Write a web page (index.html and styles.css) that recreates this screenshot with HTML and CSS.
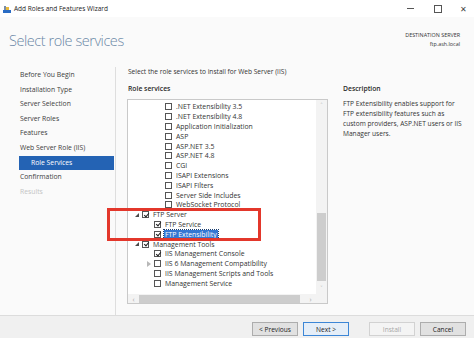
FILE: index.html
```html
<!DOCTYPE html>
<html lang="en">
<head>
    <meta charset="UTF-8">
    <title>Add Roles and Features Wizard</title>
    <link rel="stylesheet" href="styles.css">
</head>
<body>
    <div class="window">
        <!-- title bar -->
        <div class="titlebar">
            <svg class="app-icon" width="8" height="8" viewBox="0 0 8 8">
                <rect x="0" y="5" width="8" height="3" fill="#2a6cc4"/>
                <rect x="1" y="1" width="2" height="4" fill="#7a8da6"/>
                <rect x="3" y="2" width="3" height="3" fill="#e8b93a"/>
            </svg>
            <span class="title">Add Roles and Features Wizard</span>
            <div class="controls">
                <span class="ctl ctl-min"></span>
                <span class="ctl ctl-max"></span>
                <span class="ctl ctl-close">&#x2715;</span>
            </div>
        </div>

        <!-- header -->
        <div class="head">
            <h1>Select role services</h1>
            <div class="dest">
                <div>DESTINATION SERVER</div>
                <div>ftp.ash.local</div>
            </div>
        </div>

        <div class="main">
            <!-- steps -->
            <nav class="steps">
                <div class="step">Before You Begin</div>
                <div class="step">Installation Type</div>
                <div class="step">Server Selection</div>
                <div class="step">Server Roles</div>
                <div class="step">Features</div>
                <div class="step">Web Server Role (IIS)</div>
                <div class="step sub active">Role Services</div>
                <div class="step">Confirmation</div>
                <div class="step off">Results</div>
            </nav>

            <section class="content">
                <p class="intro">Select the role services to install for Web Server (IIS)</p>
                <div class="cols">
                    <div class="services">
                        <h2>Role services</h2>
                        <div class="treebox">
                            <div class="tree">
                                <div class="row l3"><i class="exp"></i><i class="cb"></i><span>.NET Extensibility 3.5</span></div>
                                <div class="row l3"><i class="exp"></i><i class="cb"></i><span>.NET Extensibility 4.8</span></div>
                                <div class="row l3"><i class="exp"></i><i class="cb"></i><span>Application Initialization</span></div>
                                <div class="row l3"><i class="exp"></i><i class="cb"></i><span>ASP</span></div>
                                <div class="row l3"><i class="exp"></i><i class="cb"></i><span>ASP.NET 3.5</span></div>
                                <div class="row l3"><i class="exp"></i><i class="cb"></i><span>ASP.NET 4.8</span></div>
                                <div class="row l3"><i class="exp"></i><i class="cb"></i><span>CGI</span></div>
                                <div class="row l3"><i class="exp"></i><i class="cb"></i><span>ISAPI Extensions</span></div>
                                <div class="row l3"><i class="exp"></i><i class="cb"></i><span>ISAPI Filters</span></div>
                                <div class="row l3"><i class="exp"></i><i class="cb"></i><span>Server Side Includes</span></div>
                                <div class="row l3"><i class="exp"></i><i class="cb"></i><span>WebSocket Protocol</span></div>
                                <div class="row l1"><i class="exp open"></i><i class="cb on"></i><span>FTP Server</span></div>
                                <div class="row l2"><i class="exp"></i><i class="cb on"></i><span>FTP Service</span></div>
                                <div class="row l2"><i class="exp"></i><i class="cb on"></i><span class="sel">FTP Extensibility</span></div>
                                <div class="row l1"><i class="exp open"></i><i class="cb on"></i><span>Management Tools</span></div>
                                <div class="row l2"><i class="exp"></i><i class="cb on"></i><span>IIS Management Console</span></div>
                                <div class="row l2"><i class="exp shut"></i><i class="cb"></i><span>IIS 6 Management Compatibility</span></div>
                                <div class="row l2"><i class="exp"></i><i class="cb"></i><span>IIS Management Scripts and Tools</span></div>
                                <div class="row l2"><i class="exp"></i><i class="cb"></i><span>Management Service</span></div>
                            </div>
                            <div class="vscroll">
                                <span class="arrow">&#x02C4;</span>
                                <span class="vtrack"><span class="vthumb"></span></span>
                                <span class="arrow">&#x02C5;</span>
                            </div>
                            <div class="hscroll">
                                <span class="arrow">&lsaquo;</span>
                                <span class="htrack"><span class="hthumb"></span></span>
                                <span class="arrow">&rsaquo;</span>
                            </div>
                            <div class="corner"></div>
                        </div>
                    </div>
                    <div class="desc">
                        <h2>Description</h2>
                        <p>FTP Extensibility enables support for FTP extensibility features such as custom providers, ASP.NET users or IIS Manager users.</p>
                    </div>
                </div>
            </section>

            <!-- annotation -->
            <div class="callout"></div>
        </div>

        <footer class="foot">
            <button class="btn">&lt; Previous</button>
            <button class="btn primary">Next &gt;</button>
            <button class="btn disabled">Install</button>
            <button class="btn">Cancel</button>
        </footer>
    </div>
</body>
</html>
```

FILE: styles.css
```css
/* base */
* {
    box-sizing: border-box;
    margin: 0;
    padding: 0;
}

body {
    font-family: 'Segoe UI', 'Open Sans', 'Noto Sans', sans-serif;
    background: #fafafa;
    color: #333;
    width: 474px;
    height: 338px;
    overflow: hidden;
}

.window {
    display: flex;
    flex-direction: column;
    height: 338px;
}

/* title bar */
.titlebar {
    height: 17px;
    background: #fff;
    display: flex;
    align-items: center;
    padding-left: 3px;
    font-size: 6.5px;
    color: #222;
}

.app-icon {
    margin-right: 3px;
}

.controls {
    margin-left: auto;
    display: flex;
    align-items: center;
}

.ctl {
    width: 28px;
    display: flex;
    justify-content: center;
    align-items: center;
    color: #444;
}

.ctl-min::before {
    content: '';
    width: 7px;
    height: 1px;
    background: #555;
}

.ctl-max::before {
    content: '';
    width: 6px;
    height: 6px;
    border: 1px solid #555;
}

.ctl-close {
    font-size: 8px;
    width: 22px;
}

/* header */
.head {
    height: 45px;
    display: flex;
    justify-content: space-between;
    padding: 14px 14px 0 9px;
}

.head h1 {
    font-size: 14.5px;
    font-weight: 300;
    letter-spacing: -0.45px;
    color: #6a87a6;
    line-height: 19px;
}

.dest {
    text-align: right;
    font-size: 5.4px;
    line-height: 9px;
    color: #333;
}

/* main */
.main {
    position: relative;
    height: 253px;
    display: flex;
}

.steps {
    width: 116px;
    margin-top: 5px;
    padding-top: 1px;
    border-right: 1px solid #dedede;
    font-size: 6.8px;
    color: #3c3c3c;
}

.step {
    height: 14.6px;
    line-height: 14.6px;
    padding-left: 20px;
}

.step.sub {
    margin-left: 19px;
    margin-right: 1px;
    padding-left: 12px;
}

.step.active {
    background: #2463b4;
    color: #fff;
}

.step.off {
    color: #c4c4c4;
}

.content {
    flex: 1;
    padding: 5px 0 0 11px;
}

.intro {
    font-size: 6.6px;
    line-height: 10px;
    padding-left: 1px;
}

.cols {
    display: flex;
    gap: 15px;
    margin-top: 7px;
}

.cols h2 {
    font-size: 6.8px;
    font-weight: 600;
    line-height: 10px;
    color: #2a2a2a;
}

.services h2 {
    padding-left: 1px;
}

/* tree */
.treebox {
    margin-top: 5px;
    width: 201px;
    height: 205px;
    border: 1px solid #c9c9c9;
    background: #fff;
    display: grid;
    grid-template-columns: 1fr 11px;
    grid-template-rows: 1fr 11px;
    overflow: hidden;
}

.tree {
    padding-top: 2px;
    overflow: hidden;
    font-size: 6.9px;
    color: #333;
}

.row {
    height: 9.8px;
    display: flex;
    align-items: center;
    white-space: nowrap;
}

.row.l1 { padding-left: 3px; }
.row.l2 { padding-left: 15px; }
.row.l3 { padding-left: 26px; }

.exp {
    width: 11px;
    height: 7px;
    display: flex;
    align-items: center;
    justify-content: center;
}

.exp.open::before {
    content: '';
    border-right: 4px solid #4a4a4a;
    border-top: 4px solid transparent;
}

.exp.shut::before {
    content: '';
    border-left: 4px solid #b8b8b8;
    border-top: 3px solid transparent;
    border-bottom: 3px solid transparent;
}

.cb {
    position: relative;
    width: 7px;
    height: 7px;
    border: 1px solid #555;
    background: #fff;
    margin-right: 4px;
}

.cb.on::after {
    content: '';
    position: absolute;
    left: 1.5px;
    top: -0.5px;
    width: 2px;
    height: 4px;
    border-right: 1.3px solid #222;
    border-bottom: 1.3px solid #222;
    transform: rotate(40deg);
}

.sel {
    background: #3477d2;
    color: #fff;
    padding: 0 1px;
    margin-left: -1px;
    outline: 1px dotted #1b3f70;
}

.vscroll {
    display: flex;
    flex-direction: column;
    align-items: center;
    background: #f3f3f3;
}

.hscroll {
    display: flex;
    align-items: center;
    background: #f3f3f3;
}

.corner {
    background: #f3f3f3;
}

.arrow {
    font-size: 7px;
    line-height: 11px;
    width: 11px;
    text-align: center;
    color: #a8a8a8;
}

.vtrack {
    flex: 1;
    width: 100%;
    display: flex;
    flex-direction: column;
    padding-top: 102px;
    padding-bottom: 2px;
}

.vthumb {
    display: block;
    height: 68px;
    margin: 0 1px;
    background: #cdcdcd;
}

.htrack {
    flex: 1;
    height: 100%;
    padding: 1px 0;
    padding-right: 5px;
    display: flex;
}

.hthumb {
    display: block;
    flex: 1;
    background: #cdcdcd;
}

/* description */
.desc {
    width: 122px;
}

.desc p {
    margin-top: 5px;
    font-size: 6.6px;
    line-height: 10px;
    color: #333;
}

/* red annotation box */
.callout {
    position: absolute;
    left: 107px;
    top: 146px;
    width: 154px;
    height: 33px;
    border: 3px solid #e3372b;
}

/* footer */
.foot {
    height: 23px;
    border-top: 1px solid #dcdcdc;
    background: #f0f0f0;
    display: flex;
    align-items: flex-start;
    padding: 6px 8px 0 0;
    justify-content: flex-end;
    gap: 5px;
}

.btn {
    width: 46px;
    height: 14px;
    font-family: inherit;
    font-size: 6.6px;
    color: #222;
    background: #e1e1e1;
    border: 1px solid #adadad;
}

.btn.primary {
    background: #e5eef8;
    border: 1px solid #3c86d6;
}

.btn.disabled {
    margin-left: 15px;
    background: #f4f4f4;
    border-color: #d2d2d2;
    color: #a6a6a6;
}
```
